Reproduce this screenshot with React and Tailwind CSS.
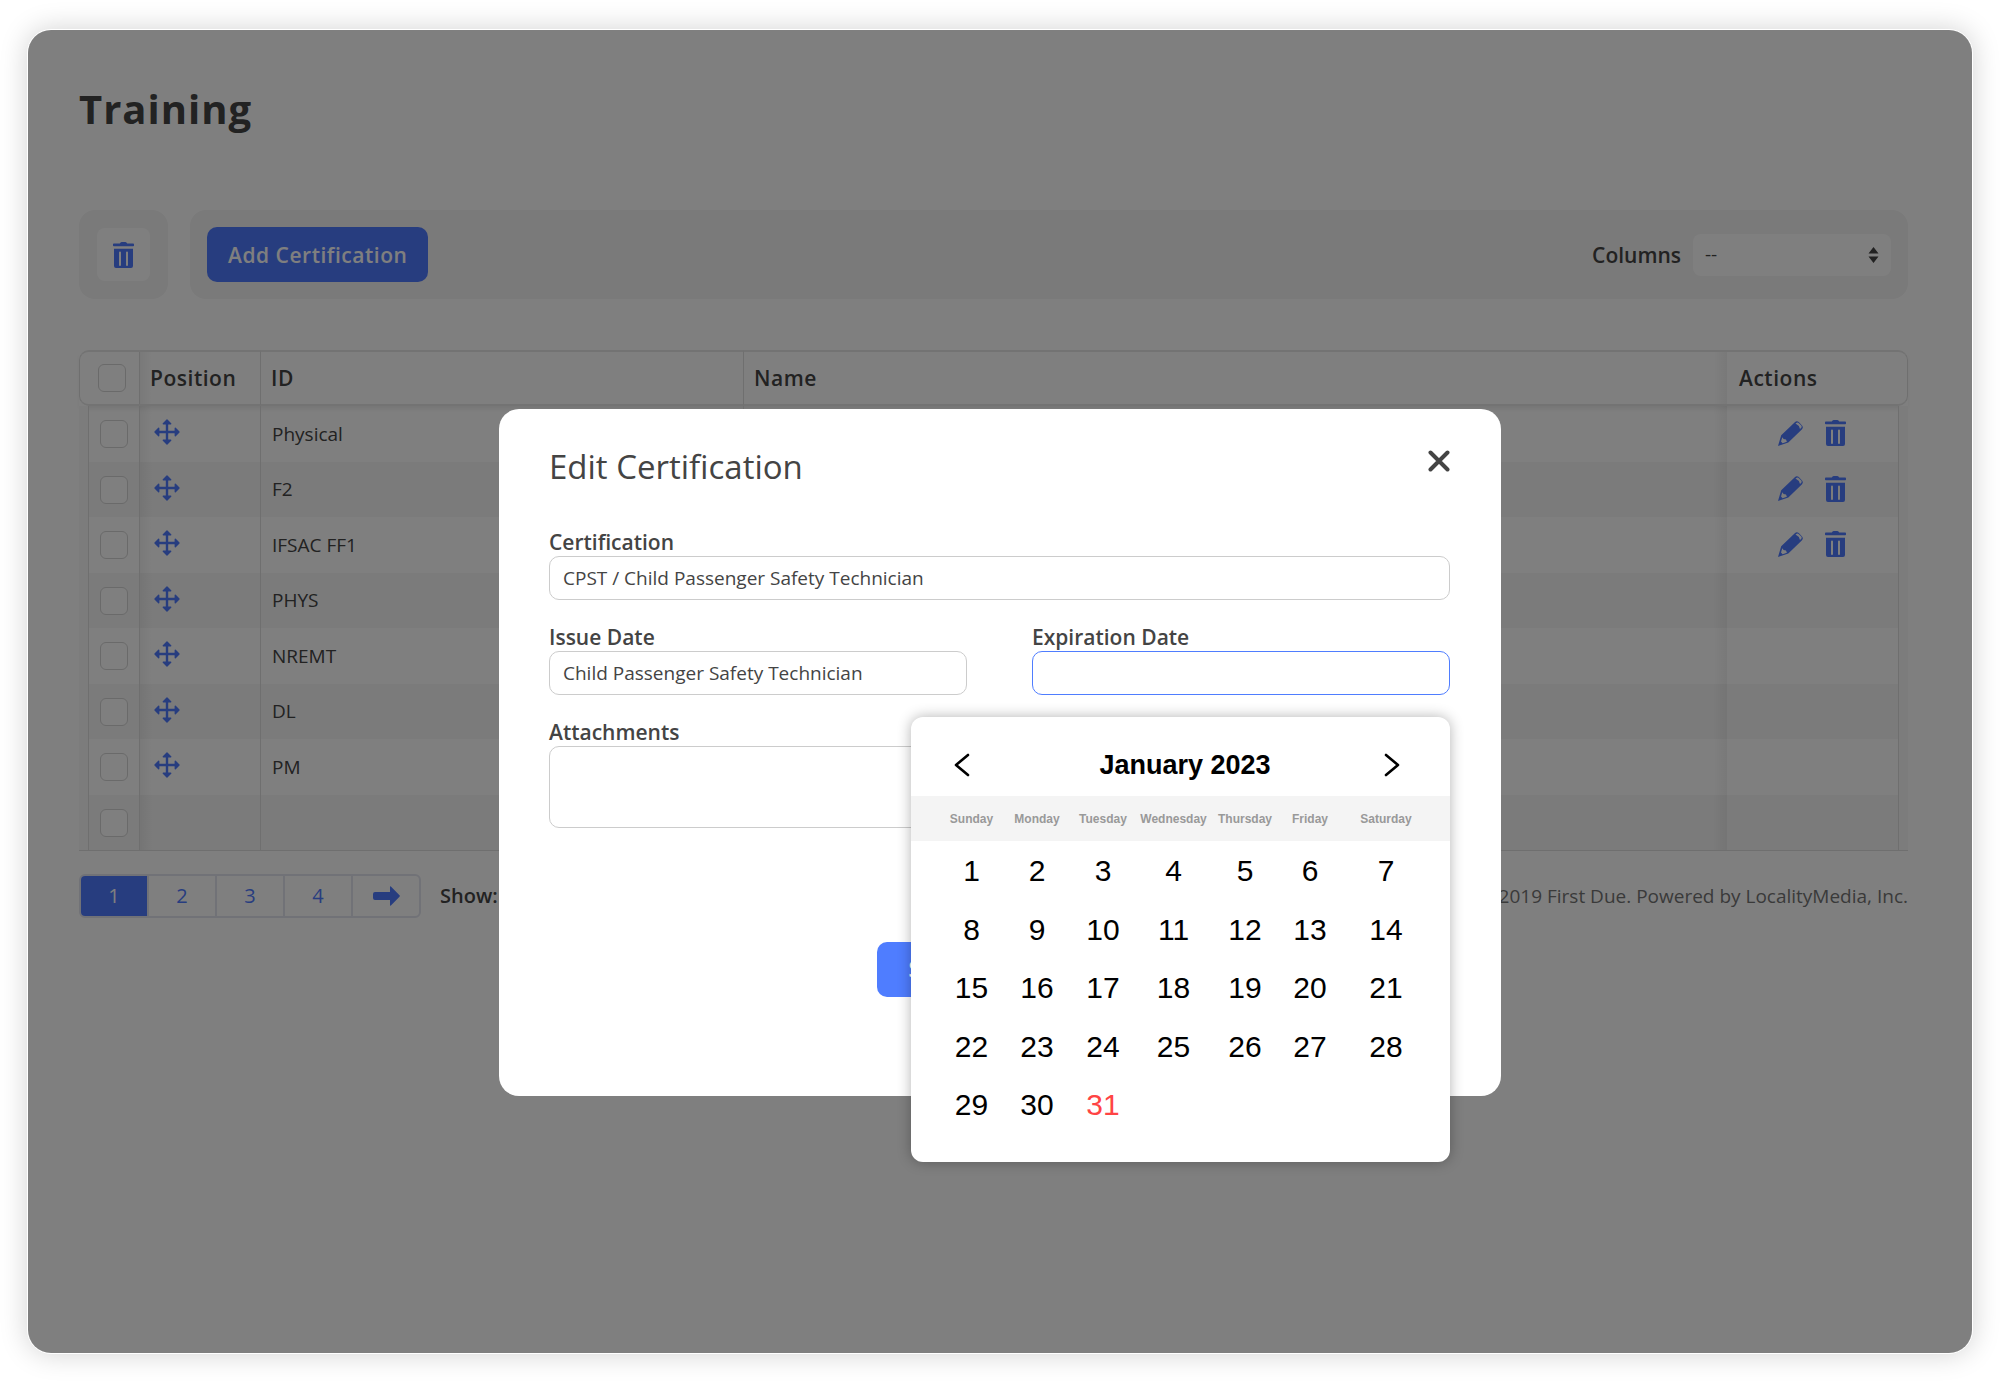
import { useState } from 'react';

const ROWS = [
  { id: 'Physical', movable: true, editable: true },
  { id: 'F2', movable: true, editable: true },
  { id: 'IFSAC FF1', movable: true, editable: true },
  { id: 'PHYS', movable: true },
  { id: 'NREMT', movable: true },
  { id: 'DL', movable: true },
  { id: 'PM', movable: true },
  { id: '' },
];

const WEEKDAYS = ['Sunday', 'Monday', 'Tuesday', 'Wednesday', 'Thursday', 'Friday', 'Saturday'];

const WEEKS = [
  [1, 2, 3, 4, 5, 6, 7],
  [8, 9, 10, 11, 12, 13, 14],
  [15, 16, 17, 18, 19, 20, 21],
  [22, 23, 24, 25, 26, 27, 28],
  [29, 30, 31, null, null, null, null],
];

function TrashIcon() {
  return (
    <svg width="21" height="26" viewBox="0 0 21 26" fill="currentColor" fillRule="evenodd" aria-hidden="true">
      <path d="M0 2.400Q0 1.600.8 1.600H6.800Q7.400 0 8.600 0H12.400Q13.600 0 14.200 1.600H20.200Q21 1.600 21 2.400V3.400Q21 4.200 20.200 4.200H.8Q0 4.200 0 3.400Z" />
      <path d="M1 6.700H20V24Q20 26 18 26H3Q1 26 1 24ZM6 10.500V23Q6 24 7 24T8 23V10.500Q8 9.500 7 9.500T6 10.500ZM13 10.500V23Q13 24 14 24T15 23V10.500Q15 9.500 14 9.500T13 10.500Z" />
    </svg>
  );
}

function PencilIcon() {
  return (
    <svg width="25" height="25" viewBox="0 0 25 25" fill="currentColor" fillRule="evenodd" aria-hidden="true">
      <path d="M0 25 3.200 14.200 16.800 1.200Q18.800-.8 20.800 1L24 4.400Q25.800 6.400 23.800 8.600L10.300 21.600ZM4.300 16.200 3 20.600 4.600 22.200 8.900 20.800 8 18.400 5.600 17.900ZM17.500 2.600Q20.800 4 22 8L23 7Q24.200 5.700 23.200 4.600L20.300 1.800Q19.200 1 18.200 1.900Z" />
    </svg>
  );
}

function MoveIcon() {
  return (
    <svg width="26" height="26" viewBox="0 0 26 26" fill="currentColor" stroke="currentColor" aria-hidden="true">
      <path d="M13 3v20M3 13h20" strokeWidth="2.400" />
      <path
        d="M13 1l3.700 3.700H9.300zM13 25l3.700-3.700H9.300zM1 13l3.700-3.700v7.400zM25 13l-3.700-3.700v7.400z"
        strokeWidth="1.400"
        strokeLinejoin="round"
      />
    </svg>
  );
}

function ArrowIcon() {
  return (
    <svg width="27" height="20" viewBox="0 0 27 20" fill="currentColor" aria-hidden="true">
      <path d="M2 6h15V1q0-1.200.9-.4l8.600 8.700q.7.700 0 1.400l-8.600 8.700q-.9.800-.9-.4v-5H2q-2 0-2-2V8q0-2 2-2z" />
    </svg>
  );
}

function Chevron({ d }) {
  return (
    <svg width="16" height="24" viewBox="0 0 16 24" fill="none" stroke="currentColor" strokeWidth="2.600" strokeLinecap="round" strokeLinejoin="round" aria-hidden="true">
      <path d={d} />
    </svg>
  );
}

function Checkbox({ label }) {
  return (
    <input
      type="checkbox"
      aria-label={label}
      className="block w-7 h-7 appearance-none rounded-md border border-[#d4d4d4] bg-white"
    />
  );
}

function Toolbar() {
  return (
    <div className="mt-[73px] flex gap-[22px]">
      <div className="rounded-2xl bg-[#f4f4f4] p-[18px]">
        <button type="button" aria-label="Delete" className="flex h-[53px] w-[53px] items-center justify-center rounded-lg bg-white text-[#4f7aff]">
          <TrashIcon />
        </button>
      </div>
      <div className="flex flex-1 items-center rounded-2xl bg-[#f4f4f4] px-[17px]">
        <button type="button" className="h-[55px] rounded-[10px] bg-[#4f7aff] px-[21px] pt-0.5 text-[21px] font-semibold tracking-wide text-white">
          Add Certification
        </button>
        <label htmlFor="columns" className="ml-auto mr-3 pt-0.5 text-[21px] font-semibold">
          Columns
        </label>
        <div className="relative">
          <select id="columns" className="block h-[42px] w-[198px] appearance-none rounded-lg bg-white pl-3 text-[19px]">
            <option>--</option>
          </select>
          <svg className="pointer-events-none absolute right-3 top-[13px]" width="11" height="16" viewBox="0 0 11 16" fill="currentColor" aria-hidden="true">
            <path d="M5.500 0l5 6.500H.5zM5.500 16l5-6.500H.5z" />
          </svg>
        </div>
      </div>
    </div>
  );
}

function CertTable() {
  const line = 'border-[#dfdfdf]';
  const headLine = 'border-t-[#e6e6e6] border-b-[#e6e6e6]';
  const headText = 'pt-0.5 font-semibold tracking-wide';
  const left = 'bg-[linear-gradient(to_right,rgba(0,0,0,.05),transparent_12px)]';
  const right = 'bg-[linear-gradient(to_left,rgba(0,0,0,.05),transparent_14px)]';
  return (
    <table className="mt-[51px] w-full table-fixed border-separate border-spacing-0 text-left">
      <colgroup>
        <col className="w-[9px]" />
        <col className="w-[52px]" />
        <col className="w-[121px]" />
        <col className="w-[483px]" />
        <col />
        <col className="w-[172px]" />
        <col className="w-[9px]" />
      </colgroup>
      <thead className="shadow-[0_4px_6px_-2px_rgba(0,0,0,0.1)]">
        <tr className="h-14 text-[21px]">
          <th colSpan={2} className={`rounded-l-[10px] border-y-2 border-x ${line} ${headLine} pl-[18px]`}>
            <Checkbox label="Select all" />
          </th>
          <th className={`border-y-2 border-r ${line} ${headLine} ${left} ${headText} pl-[10px]`}>Position</th>
          <th className={`border-y-2 border-r ${line} ${headLine} ${headText} pl-[10px]`}>ID</th>
          <th className={`border-y-2 ${headLine} ${right} ${headText} pl-[10px]`}>Name</th>
          <th colSpan={2} className={`rounded-r-[10px] border-y-2 border-r ${line} ${headLine} ${headText} pl-3`}>
            Actions
          </th>
        </tr>
      </thead>
      <tbody className="text-[19px]">
        {ROWS.map((row, i) => (
          <tr key={i} className="h-14 even:h-[55px] even:bg-[#f6f6f6]">
            <td className="bg-[#f8f8f8]" />
            <td className={`border-x ${line} pl-[11px]`}>
              <Checkbox label={`Select ${row.id}`} />
            </td>
            <td className={`border-r ${line} ${left} pl-[14px] text-[#4f7aff]`}>
              {row.movable ? (
                <button type="button" aria-label="Move" className="block pb-1">
                  <MoveIcon />
                </button>
              ) : null}
            </td>
            <td className={`border-r ${line} pl-[11px]`}>{row.id}</td>
            <td className={right} />
            <td className={`border-r ${line} text-[#4f7aff]`}>
              {row.editable ? (
                <div className="flex items-center gap-[22px] pb-0.5 pl-[51px]">
                  <button type="button" aria-label="Edit"><PencilIcon /></button>
                  <button type="button" aria-label="Delete"><TrashIcon /></button>
                </div>
              ) : null}
            </td>
            <td className="bg-[#f8f8f8]" />
          </tr>
        ))}
      </tbody>
      <tfoot>
        <tr>
          <td colSpan={7} className={`border-t ${line}`} />
        </tr>
      </tfoot>
    </table>
  );
}

function Footer() {
  return (
    <div className="mt-[23px] flex items-center text-[20px]">
      <nav className="flex h-11 divide-x-2 divide-[#e2e4ee] overflow-hidden rounded-md border-2 border-[#e2e4ee] text-[#4f7aff]">
        <button type="button" className="w-[68px] bg-[#4f7aff] text-white">1</button>
        <button type="button" className="w-[68px]">2</button>
        <button type="button" className="w-[68px]">3</button>
        <button type="button" className="w-[68px]">4</button>
        <button type="button" aria-label="Next page" className="flex w-[66px] items-center justify-center">
          <ArrowIcon />
        </button>
      </nav>
      <span className="ml-[19px] font-semibold">Show:</span>
      <span className="ml-auto text-[19px] text-[#757575]">© 2019 First Due. Powered by LocalityMedia, Inc.</span>
    </div>
  );
}

function Calendar() {
  const [selected, setSelected] = useState(31);
  return (
    <div className="absolute right-0 top-full mt-[22px] w-[539px] overflow-hidden rounded-xl bg-white pb-7 font-['Liberation_Sans',Arial,sans-serif] text-black shadow-[0_0_14px_rgba(0,0,0,0.3)]">
      <div className="flex h-[79px] items-center pl-[43px] pr-[50px] pt-4">
        <button type="button" aria-label="Previous month">
          <Chevron d="M14 2 2 12 14 22" />
        </button>
        <h3 className="flex-1 pl-4 pt-0.5 text-center text-[27px] font-bold">January 2023</h3>
        <button type="button" aria-label="Next month">
          <Chevron d="M2 2 14 12 2 22" />
        </button>
      </div>
      <table className="w-full table-fixed text-center">
        <colgroup>
          <col className="w-[93px]" />
          <col className="w-[66px]" />
          <col className="w-[66px]" />
          <col className="w-[75px]" />
          <col className="w-[68px]" />
          <col className="w-[62px]" />
          <col className="w-[109px]" />
        </colgroup>
        <thead>
          <tr className="h-[45px] bg-[#f4f4f4] text-[12px] text-[#999]">
            {WEEKDAYS.map((day) => (
              <th key={day} className="font-bold first:pl-7 last:pr-[19px]">{day}</th>
            ))}
          </tr>
        </thead>
        <tbody>
          {WEEKS.map((week, i) => (
            <tr key={i} className="h-[59px] text-[30px] even:h-[58px]">
              {week.map((day, j) => (
                <td key={j} className="first:pl-7 last:pr-[19px]">
                  {day ? (
                    <button type="button" className={day === selected ? 'text-[#f44]' : ''} onClick={() => setSelected(day)}>
                      {day}
                    </button>
                  ) : null}
                </td>
              ))}
            </tr>
          ))}
        </tbody>
      </table>
    </div>
  );
}

function EditModal() {
  const label = 'block text-[21px] leading-7 font-semibold';
  const field = 'block h-11 w-full rounded-[10px] border px-[13px] text-[19px] outline-none';
  return (
    <form
      role="dialog"
      aria-labelledby="edit-title"
      className="w-[1002px] max-w-full rounded-[20px] bg-white pb-[99px] pl-[50px] pr-[51px] pt-9 text-[#444]"
    >
      <div className="flex items-start justify-between">
        <h2 id="edit-title" className="text-[33px] leading-[44px]">Edit Certification</h2>
        <button type="button" aria-label="Close" className="pt-[5px]">
          <svg width="22" height="22" viewBox="0 0 22 22" fill="none" stroke="currentColor" strokeWidth="4" strokeLinecap="round" aria-hidden="true">
            <path d="M2.500 2.500l17 17M19.500 2.500l-17 17" />
          </svg>
        </button>
      </div>

      <div className="mt-[39px] grid grid-cols-2 gap-x-[65px] gap-y-[23px]">
        <div className="col-span-2">
          <label htmlFor="certification" className={label}>Certification</label>
          <input id="certification" className={`${field} border-[#ccc]`} defaultValue="CPST / Child Passenger Safety Technician" />
        </div>
        <div>
          <label htmlFor="issue" className={label}>Issue Date</label>
          <input id="issue" className={`${field} border-[#ccc]`} defaultValue="Child Passenger Safety Technician" />
        </div>
        <div className="relative">
          <label htmlFor="expiration" className={label}>Expiration Date</label>
          <input id="expiration" className={`${field} border-[#4f7dff]`} />
          <Calendar />
        </div>
        <div className="col-span-2">
          <label htmlFor="attachments" className={label}>Attachments</label>
          <textarea id="attachments" className="block h-[82px] w-full resize-none rounded-[10px] border border-[#ccc]" />
        </div>
      </div>

      <button type="submit" className="mx-auto mt-[114px] block h-[55px] w-[246px] rounded-[10px] bg-[#4f7dff] px-8 text-left text-[21px] font-semibold text-white">
        Save
      </button>
    </form>
  );
}

export default function App() {
  return (
    <div className="flex min-h-screen bg-white px-[27px] pb-[27px] pt-[29px] font-['Open_Sans',sans-serif] text-[#444]">
      <div className="relative flex-1 overflow-hidden rounded-3xl border border-white bg-white shadow-[0_0_28px_rgba(0,0,0,0.18)]">
        <main className="pb-10 pl-[51px] pr-16 pt-[51px]">
          <h1 className="text-[40px] font-bold leading-[56px] tracking-wide">Training</h1>
          <Toolbar />
          <CertTable />
          <Footer />
        </main>
        {/* Backdrop and dialog */}
        <div className="absolute inset-0 flex items-start justify-center bg-black/50 pt-[379px]">
          <EditModal />
        </div>
      </div>
    </div>
  );
}
